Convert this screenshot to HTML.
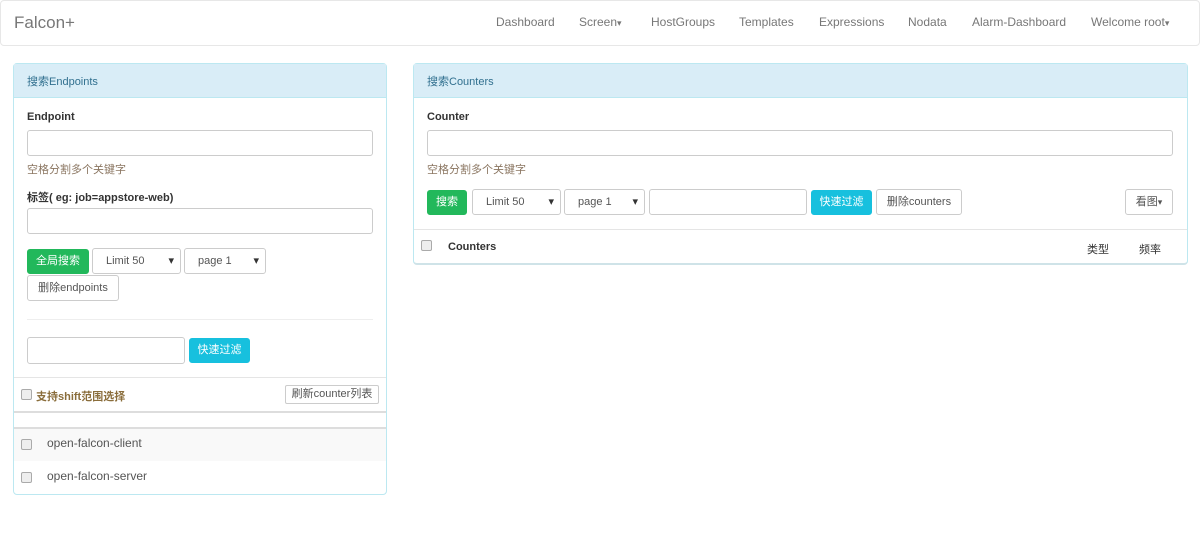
<!DOCTYPE html>
<html><head><meta charset="utf-8"><style>
*{box-sizing:border-box;margin:0;padding:0}
body{width:1200px;height:558px;background:#fff;font-family:"Liberation Sans","Noto Sans CJK SC",sans-serif;font-size:12px;color:#333;position:relative;overflow:hidden}
.a{position:absolute;white-space:nowrap}
.nav{left:0;top:0;width:1200px;height:46px;border:1px solid #e7e7e7;border-radius:4px;background:#fff}
.ni{top:15px;color:#777;font-size:12px}
.panel{border:1px solid #bce8f1;border-radius:4px;background:#fff}
.ph{background:#d9edf7;color:#31708f;border-bottom:1px solid #bce8f1;height:34px;padding:9px 13px;font-size:11px}
.inp{border:1px solid #ccc;border-radius:3px;background:#fff}
.btn{border:1px solid #ccc;border-radius:3px;background:#fff;color:#555;font-size:11px;text-align:center}
.g{background:#22b85b;border-color:#22b85b;color:#fff}
.c{background:#17c0de;border-color:#17c0de;color:#fff}
.sel{border:1px solid #ccc;border-radius:3px;background:#fff;color:#555;font-size:11px;padding-left:13px}
.sel:after{content:"▾";position:absolute;right:6px;top:0px;font-size:11px;color:#333}
.cb{width:11px;height:11px;border:1px solid #aaa;border-radius:2px;background:#eee}
.hint{color:#8a7560;font-size:11px}
</style></head><body>
<div class="a nav"></div>
<div class="a" style="left:14px;top:13px;font-size:17px;color:#777">Falcon+</div>
<div class="a ni" style="left:496px">Dashboard</div>
<div class="a ni" style="left:579px">Screen<span style="font-size:9px">▾</span></div>
<div class="a ni" style="left:651px">HostGroups</div>
<div class="a ni" style="left:739px">Templates</div>
<div class="a ni" style="left:819px">Expressions</div>
<div class="a ni" style="left:908px">Nodata</div>
<div class="a ni" style="left:972px">Alarm-Dashboard</div>
<div class="a ni" style="left:1091px">Welcome root<span style="font-size:9px">▾</span></div>

<div class="a panel" style="left:13px;top:63px;width:374px;height:432px">
<div class="ph">搜索Endpoints</div></div>
<div class="a" style="left:27px;top:111px;font-weight:bold;font-size:11px">Endpoint</div>
<div class="a inp" style="left:27px;top:130px;width:346px;height:26px"></div>
<div class="a hint" style="left:27px;top:161px">空格分割多个关键字</div>
<div class="a" style="left:27px;top:189px;font-weight:bold;font-size:11px">标签( eg: job=appstore-web)</div>
<div class="a inp" style="left:27px;top:208px;width:346px;height:26px"></div>
<div class="a btn g" style="left:27px;top:249px;width:62px;height:25px;line-height:23px">全局搜索</div>
<div class="a sel" style="left:92px;top:248px;width:89px;height:26px;line-height:24px">Limit 50</div>
<div class="a sel" style="left:184px;top:248px;width:82px;height:26px;line-height:24px">page 1</div>
<div class="a btn" style="left:27px;top:275px;width:92px;height:26px;line-height:24px">删除endpoints</div>
<div class="a" style="left:27px;top:319px;width:346px;height:1px;background:#eee"></div>
<div class="a inp" style="left:27px;top:337px;width:158px;height:27px"></div>
<div class="a btn c" style="left:189px;top:338px;width:61px;height:25px;line-height:23px">快速过滤</div>
<div class="a" style="left:14px;top:377px;width:372px;height:1px;background:#e5e5e5"></div>
<div class="a cb" style="left:21px;top:389px"></div>
<div class="a" style="left:36px;top:388px;font-weight:bold;color:#8a6d3b;font-size:11px">支持shift范围选择</div>
<div class="a btn" style="left:285px;top:385px;width:94px;height:19px;line-height:17px;border-radius:2px">刷新counter列表</div>
<div class="a" style="left:14px;top:411px;width:372px;height:2px;background:#ddd"></div>
<div class="a" style="left:14px;top:427px;width:372px;height:2px;background:#ddd"></div>
<div class="a" style="left:14px;top:429px;width:372px;height:32px;background:#f9f9f9"></div>
<div class="a cb" style="left:21px;top:439px"></div>
<div class="a" style="left:47px;top:436px;color:#555">open-falcon-client</div>
<div class="a cb" style="left:21px;top:472px"></div>
<div class="a" style="left:47px;top:469px;color:#555">open-falcon-server</div>

<div class="a panel" style="left:413px;top:63px;width:775px;height:202px;border-bottom:2px solid #cfe3e8">
<div class="ph">搜索Counters</div></div>
<div class="a" style="left:427px;top:111px;font-weight:bold;font-size:11px">Counter</div>
<div class="a inp" style="left:427px;top:130px;width:746px;height:26px"></div>
<div class="a hint" style="left:427px;top:161px">空格分割多个关键字</div>
<div class="a btn g" style="left:427px;top:190px;width:40px;height:25px;line-height:23px">搜索</div>
<div class="a sel" style="left:472px;top:189px;width:89px;height:26px;line-height:24px">Limit 50</div>
<div class="a sel" style="left:564px;top:189px;width:81px;height:26px;line-height:24px">page 1</div>
<div class="a inp" style="left:649px;top:189px;width:158px;height:26px"></div>
<div class="a btn c" style="left:811px;top:190px;width:61px;height:25px;line-height:23px">快速过滤</div>
<div class="a btn" style="left:876px;top:189px;width:86px;height:26px;line-height:24px">删除counters</div>
<div class="a btn" style="left:1125px;top:189px;width:48px;height:26px;line-height:24px">看图<span style="font-size:9px">▾</span></div>
<div class="a" style="left:414px;top:229px;width:773px;height:1px;background:#e5e5e5"></div>
<div class="a cb" style="left:421px;top:240px"></div>
<div class="a" style="left:448px;top:241px;font-weight:bold;font-size:11px">Counters</div>
<div class="a" style="left:1087px;top:241px;font-size:11px">类型</div>
<div class="a" style="left:1139px;top:241px;font-size:11px">频率</div>
</body></html>
